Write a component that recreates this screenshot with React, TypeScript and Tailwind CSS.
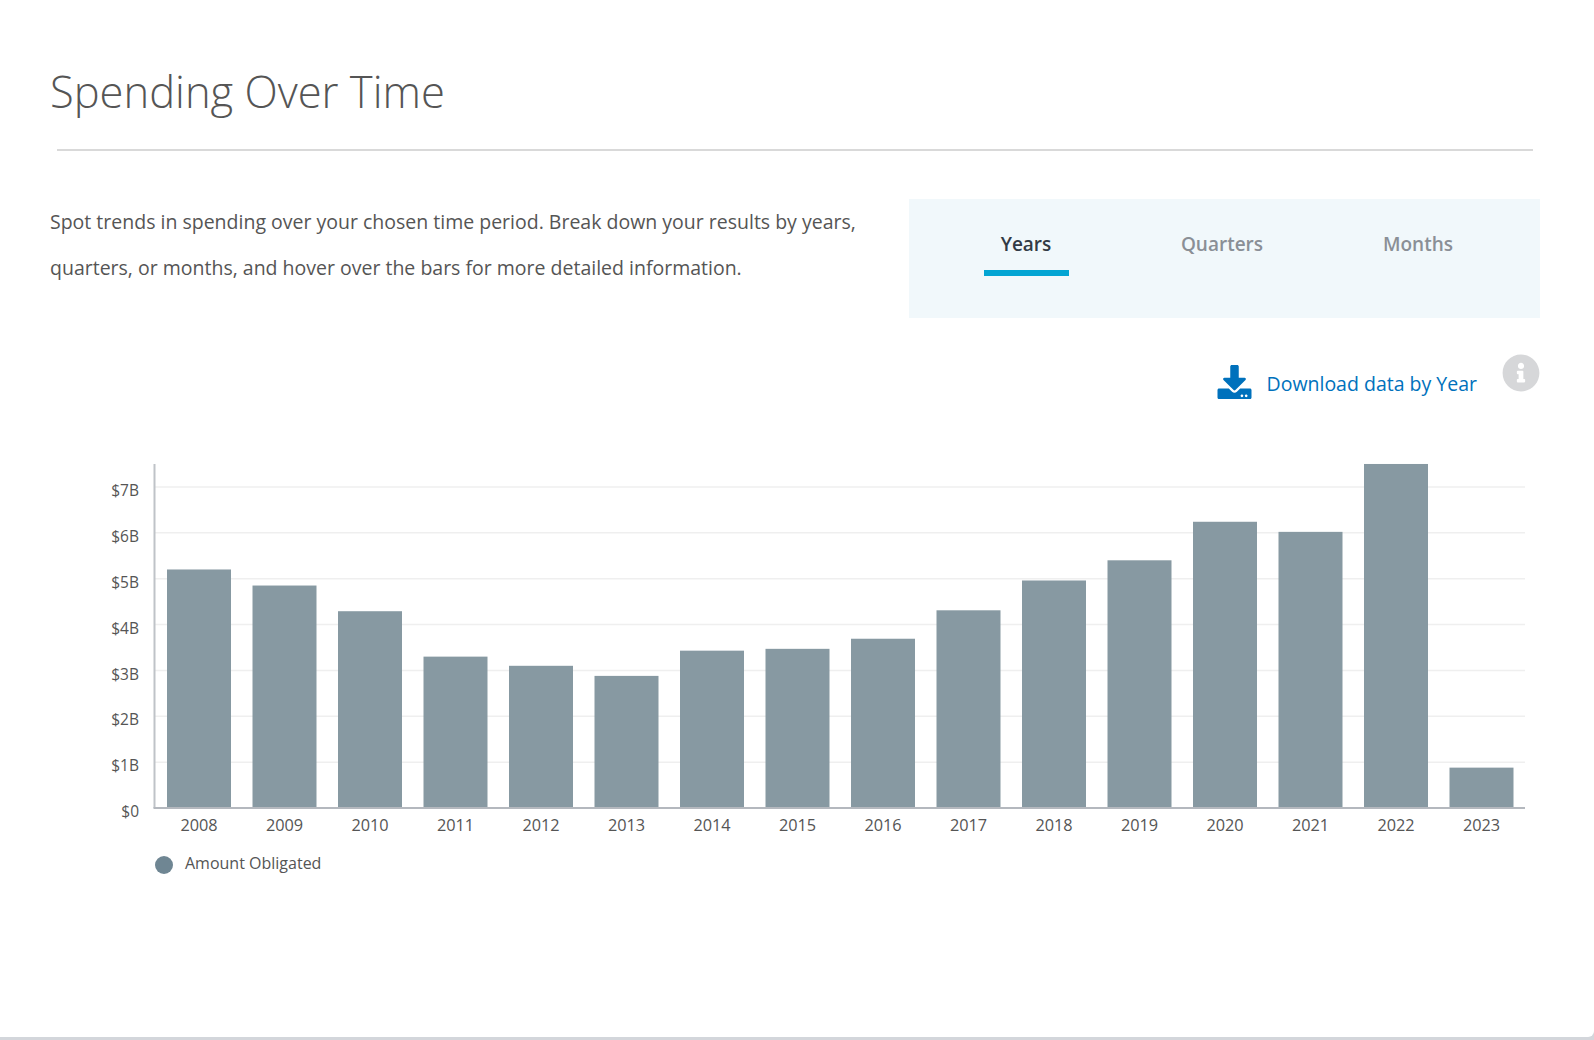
import { FaDownload, FaInfoCircle } from "react-icons/fa";

const font = { fontFamily: '"Open Sans", "Liberation Sans", sans-serif' };

const data = [
  { year: "2008", value: 5.2 },
  { year: "2009", value: 4.85 },
  { year: "2010", value: 4.29 },
  { year: "2011", value: 3.3 },
  { year: "2012", value: 3.1 },
  { year: "2013", value: 2.88 },
  { year: "2014", value: 3.43 },
  { year: "2015", value: 3.47 },
  { year: "2016", value: 3.69 },
  { year: "2017", value: 4.31 },
  { year: "2018", value: 4.96 },
  { year: "2019", value: 5.4 },
  { year: "2020", value: 6.24 },
  { year: "2021", value: 6.02 },
  { year: "2022", value: 7.5 },
  { year: "2023", value: 0.88 },
];

const tabs = ["Years", "Quarters", "Months"];

function SpendingChart() {
  // chart geometry in svg units
  const left = 104.5;
  const right = 1475;
  const base = 369;
  const perB = 45.87;
  const ticks = [0, 1, 2, 3, 4, 5, 6, 7];

  return (
    <svg width={1490} height={440} className="block" style={font}>
      {ticks.map((t) => (
        <g key={t}>
          {t > 0 && (
            <line
              x1={left}
              x2={right}
              y1={base - t * perB}
              y2={base - t * perB}
              stroke="#efefef"
              strokeWidth={1.5}
            />
          )}
          <text
            x={89}
            y={base - t * perB + 5}
            textAnchor="end"
            dominantBaseline="middle"
            fontSize={15.5}
            fill="#555"
          >
            {t === 0 ? "$0" : `$${t}B`}
          </text>
        </g>
      ))}

      {data.map((d, i) => {
        const x = 117 + 85.5 * i;
        const h = d.value * perB;
        return (
          <g key={d.year}>
            <rect x={x} y={base - h} width={64} height={h} fill="#8799a2" />
            <text
              x={x + 32}
              y={388}
              textAnchor="middle"
              dominantBaseline="middle"
              fontSize={16.3}
              fill="#555"
            >
              {d.year}
            </text>
          </g>
        );
      })}

      <line x1={left} x2={left} y1={25} y2={base} stroke="#bfc3c8" strokeWidth={2} />
      <line x1={left - 1} x2={right} y1={base} y2={base} stroke="#b4b8be" strokeWidth={2} />

      <circle cx={114} cy={426} r={9} fill="#6f8693" />
      <text x={135} y={426} dominantBaseline="middle" fontSize={16} fill="#555">
        Amount Obligated
      </text>
    </svg>
  );
}

export default function App() {
  return (
    <div className="h-[1040px] w-full bg-[#d3d6db]" style={font}>
      <div className="h-[1037px] w-full rounded-br-[6px] bg-white pl-[50px] pr-[54px]">
        <h1 className="pt-[66px] text-[43.5px] font-light leading-[52px] text-[#555]">
          Spending Over Time
        </h1>
        <div className="mx-[7px] mt-[31px] h-[2px] bg-[#d9d9d9]" />

        <div className="mt-[48px] flex items-start">
          <p className="w-[830px] text-[19.5px] leading-[46px] text-[#555]">
            Spot trends in spending over your chosen time period. Break down your results by years,
            quarters, or months, and hover over the bars for more detailed information.
          </p>
          <div className="ml-auto h-[119px] w-[631px] bg-[#f1f8fb] pl-[19px] pr-[24px]">
            <div className="grid grid-cols-3 pt-[32px]">
              {tabs.map((tab, i) => (
                <button key={tab} className="flex flex-col items-center">
                  <span
                    className={
                      i === 0
                        ? "text-[19px] font-semibold leading-[26px] text-[#323a45]"
                        : "text-[19px] font-semibold leading-[26px] text-[#8a8f96]"
                    }
                  >
                    {tab}
                  </span>
                  <span
                    className={
                      i === 0
                        ? "mt-[13px] h-[6px] w-[85px] bg-[#03a5d3]"
                        : "mt-[13px] h-[6px] w-[85px] bg-transparent"
                    }
                  />
                </button>
              ))}
            </div>
          </div>
        </div>

        <div className="mt-[36px] flex h-[42px] items-start justify-end">
          <a className="mt-[9px] flex items-center text-[#0071bc]">
            <FaDownload className="h-[34px] w-[35px]" />
            <span className="ml-[15px] mt-[4px] text-[19.5px] leading-[34px]">
              Download data by Year
            </span>
          </a>
          <FaInfoCircle className="ml-[25px] h-[38px] w-[38px] text-[#d6d7d9]" />
        </div>

        <div className="mt-[43px]">
          <SpendingChart />
        </div>
      </div>
    </div>
  );
}
